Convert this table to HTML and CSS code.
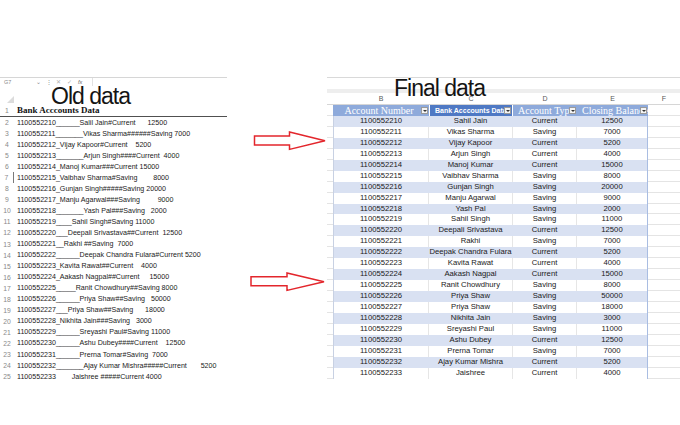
FILE: index.html
```html
<!DOCTYPE html>
<html>
<head>
<meta charset="utf-8">
<link rel="stylesheet" href="styles.css">
</head>
<body>
<div class="page">
  <section class="lp">
    <div class="fbar">
      <span class="nb">G7</span><span class="dd">⌄</span><span class="dots">⋮</span><span class="ic">✕</span><span class="ic">✓</span><span class="ic fx">fx</span><span class="fin"></span>
    </div>
    <div class="lch"><svg class="corner" width="7" height="7" viewBox="0 0 7 7"><path d="M7 0 V7 H0 Z" fill="#dcdcdc"/></svg></div>
    <div class="r1"><span class="rn">1</span><span class="t1">Bank Acccounts Data</span></div>
    <div class="lrows">
      <div class="lr"><span class="rn">2</span><span class="lt">1100552210______Salil Jain#Current      12500</span></div>
      <div class="lr"><span class="rn">3</span><span class="lt">1100552211_______Vikas Sharma######Saving 7000</span></div>
      <div class="lr"><span class="rn">4</span><span class="lt">1100552212_Vijay Kapoor#Current    5200</span></div>
      <div class="lr"><span class="rn">5</span><span class="lt">1100552213_______Arjun Singh####Current  4000</span></div>
      <div class="lr"><span class="rn">6</span><span class="lt">1100552214_Manoj Kumar###Current 15000</span></div>
      <div class="lr"><span class="rn sel">7</span><span class="lt">1100552215_Vaibhav Sharma#Saving        8000</span></div>
      <div class="lr"><span class="rn">8</span><span class="lt">1100552216_Gunjan Singh#####Saving 20000</span></div>
      <div class="lr"><span class="rn">9</span><span class="lt">1100552217_Manju Agarwal###Saving         9000</span></div>
      <div class="lr"><span class="rn">10</span><span class="lt">1100552218_______Yash Pal###Saving   2000</span></div>
      <div class="lr"><span class="rn">11</span><span class="lt">1100552219____Sahil Singh#Saving 11000</span></div>
      <div class="lr"><span class="rn">12</span><span class="lt">1100552220___Deepali Srivastava##Current  12500</span></div>
      <div class="lr"><span class="rn">13</span><span class="lt">1100552221__Rakhi ##Saving  7000</span></div>
      <div class="lr"><span class="rn">14</span><span class="lt">1100552222______Deepak Chandra Fulara#Current 5200</span></div>
      <div class="lr"><span class="rn">15</span><span class="lt">1100552223_Kavita Rawat##Current    4000</span></div>
      <div class="lr"><span class="rn">16</span><span class="lt">1100552224_Aakash Nagpal##Current     15000</span></div>
      <div class="lr"><span class="rn">17</span><span class="lt">1100552225_____Ranit Chowdhury##Saving 8000</span></div>
      <div class="lr"><span class="rn">18</span><span class="lt">1100552226______Priya Shaw##Saving   50000</span></div>
      <div class="lr"><span class="rn">19</span><span class="lt">1100552227___Priya Shaw##Saving      18000</span></div>
      <div class="lr"><span class="rn">20</span><span class="lt">1100552228_Nikhita Jain###Saving   3000</span></div>
      <div class="lr"><span class="rn">21</span><span class="lt">1100552229______Sreyashi Paul#Saving 11000</span></div>
      <div class="lr"><span class="rn">22</span><span class="lt">1100552230______Ashu Dubey####Current    12500</span></div>
      <div class="lr"><span class="rn">23</span><span class="lt">1100552231______Prerna Tomar#Saving  7000</span></div>
      <div class="lr"><span class="rn">24</span><span class="lt">1100552232_______Ajay Kumar Mishra#####Current       5200</span></div>
      <div class="lr"><span class="rn">25</span><span class="lt">1100552233        Jaishree #####Current 4000</span></div>
    </div>
    <div class="title old">Old data</div>
  </section>

  <div class="mid">
    <svg class="arrow a1" width="78" height="20" viewBox="0 0 78 20"><path d="M4.5 5 H39.5 V1 L75 9.7 L39.5 18.4 V14 H4.5 Z" fill="#fff" stroke="#e3262c" stroke-width="1.5" stroke-linejoin="miter"/></svg>
    <svg class="arrow a2" width="78" height="20" viewBox="0 0 78 20"><path d="M1 4.7 H37 V1 L74 9.7 L37 18.4 V13.7 H1 Z" fill="#fff" stroke="#e3262c" stroke-width="1.5" stroke-linejoin="miter"/></svg>
  </div>

  <section class="rp">
    <div class="rtop"></div>
    <div class="rband"></div>
    <div class="grid colhdr">
      <span></span><span>B</span><span>C</span><span>D</span><span>E</span><span>F</span>
    </div>
    <div class="grid th">
      <span class="ca"></span>
      <span class="h hs">Account Number<i class="fb"></i></span>
      <span class="h hc">Bank Acccounts Data<i class="fb"></i></span>
      <span class="h hs">Account Type<i class="fb"></i></span>
      <span class="h hs">Closing Balance<i class="fb"></i></span>
      <span class="cf"></span>
    </div>
    <div class="tbody">
      <div class="grid tr"><i class="ca"></i><span class="c">1100552210</span><span class="c">Sahil Jain</span><span class="c">Current</span><span class="c ce">12500</span><i class="cf"></i></div>
      <div class="grid tr"><i class="ca"></i><span class="c">1100552211</span><span class="c">Vikas Sharma</span><span class="c">Saving</span><span class="c ce">7000</span><i class="cf"></i></div>
      <div class="grid tr"><i class="ca"></i><span class="c">1100552212</span><span class="c">Vijay Kapoor</span><span class="c">Current</span><span class="c ce">5200</span><i class="cf"></i></div>
      <div class="grid tr"><i class="ca"></i><span class="c">1100552213</span><span class="c">Arjun Singh</span><span class="c">Current</span><span class="c ce">4000</span><i class="cf"></i></div>
      <div class="grid tr"><i class="ca"></i><span class="c">1100552214</span><span class="c">Manoj Kumar</span><span class="c">Current</span><span class="c ce">15000</span><i class="cf"></i></div>
      <div class="grid tr"><i class="ca"></i><span class="c">1100552215</span><span class="c">Vaibhav Sharma</span><span class="c">Saving</span><span class="c ce">8000</span><i class="cf"></i></div>
      <div class="grid tr"><i class="ca"></i><span class="c">1100552216</span><span class="c">Gunjan Singh</span><span class="c">Saving</span><span class="c ce">20000</span><i class="cf"></i></div>
      <div class="grid tr"><i class="ca"></i><span class="c">1100552217</span><span class="c">Manju Agarwal</span><span class="c">Saving</span><span class="c ce">9000</span><i class="cf"></i></div>
      <div class="grid tr"><i class="ca"></i><span class="c">1100552218</span><span class="c">Yash Pal</span><span class="c">Saving</span><span class="c ce">2000</span><i class="cf"></i></div>
      <div class="grid tr"><i class="ca"></i><span class="c">1100552219</span><span class="c">Sahil Singh</span><span class="c">Saving</span><span class="c ce">11000</span><i class="cf"></i></div>
      <div class="grid tr"><i class="ca"></i><span class="c">1100552220</span><span class="c">Deepali Srivastava</span><span class="c">Current</span><span class="c ce">12500</span><i class="cf"></i></div>
      <div class="grid tr"><i class="ca"></i><span class="c">1100552221</span><span class="c">Rakhi</span><span class="c">Saving</span><span class="c ce">7000</span><i class="cf"></i></div>
      <div class="grid tr"><i class="ca"></i><span class="c">1100552222</span><span class="c">Deepak Chandra Fulara</span><span class="c">Current</span><span class="c ce">5200</span><i class="cf"></i></div>
      <div class="grid tr"><i class="ca"></i><span class="c">1100552223</span><span class="c">Kavita Rawat</span><span class="c">Current</span><span class="c ce">4000</span><i class="cf"></i></div>
      <div class="grid tr"><i class="ca"></i><span class="c">1100552224</span><span class="c">Aakash Nagpal</span><span class="c">Current</span><span class="c ce">15000</span><i class="cf"></i></div>
      <div class="grid tr"><i class="ca"></i><span class="c">1100552225</span><span class="c">Ranit Chowdhury</span><span class="c">Saving</span><span class="c ce">8000</span><i class="cf"></i></div>
      <div class="grid tr"><i class="ca"></i><span class="c">1100552226</span><span class="c">Priya Shaw</span><span class="c">Saving</span><span class="c ce">50000</span><i class="cf"></i></div>
      <div class="grid tr"><i class="ca"></i><span class="c">1100552227</span><span class="c">Priya Shaw</span><span class="c">Saving</span><span class="c ce">18000</span><i class="cf"></i></div>
      <div class="grid tr"><i class="ca"></i><span class="c">1100552228</span><span class="c">Nikhita Jain</span><span class="c">Saving</span><span class="c ce">3000</span><i class="cf"></i></div>
      <div class="grid tr"><i class="ca"></i><span class="c">1100552229</span><span class="c">Sreyashi Paul</span><span class="c">Saving</span><span class="c ce">11000</span><i class="cf"></i></div>
      <div class="grid tr"><i class="ca"></i><span class="c">1100552230</span><span class="c">Ashu Dubey</span><span class="c">Current</span><span class="c ce">12500</span><i class="cf"></i></div>
      <div class="grid tr"><i class="ca"></i><span class="c">1100552231</span><span class="c">Prerna Tomar</span><span class="c">Saving</span><span class="c ce">7000</span><i class="cf"></i></div>
      <div class="grid tr"><i class="ca"></i><span class="c">1100552232</span><span class="c">Ajay Kumar Mishra</span><span class="c">Current</span><span class="c ce">5200</span><i class="cf"></i></div>
      <div class="grid tr"><i class="ca"></i><span class="c">1100552233</span><span class="c">Jaishree</span><span class="c">Current</span><span class="c ce">4000</span><i class="cf"></i></div>
    </div>
    <div class="title fin-t">Final data</div>
  </section>
</div>
</body>
</html>
```

FILE: styles.css
```css
* { box-sizing: border-box; }
html, body { margin: 0; background: #fff; }
body { font-family: "Liberation Sans", Arial, sans-serif; color: #111; }

.page { display: flex; padding-top: 77px; height: 425px; overflow: hidden; }

/* ---------- left panel ---------- */
.lp { width: 227px; flex: none; position: relative; }
.fbar {
  height: 15px; border-top: 1px solid #d6d6d6;
  display: flex; align-items: center; font-size: 5.5px; line-height: 5px; color: #8a8a8a;
  padding-bottom: 6px;
}
.fbar .nb { width: 36px; padding-left: 4px; }
.fbar .dd { width: 10px; font-size: 6px; }
.fbar .dots { width: 10px; }
.fbar .ic { width: 11px; color: #b0b0b0; font-size: 5.5px; }
.fbar .fx { font-style: italic; color: #666; }
.fbar .fin { flex: 1; height: 8px; border-left: 1px solid #e2e2e2; margin-left: 3px; }

.lch { height: 12px; position: relative; display: flex; align-items: flex-end; padding-left: 7px; padding-bottom: 1px; }

.r1 { height: 13px; border-bottom: 1px solid #505050; display: flex; align-items: center; }
.t1 { font-family: "Liberation Serif", "Times New Roman", serif; font-weight: bold; font-size: 9px; padding-left: 3px; color: #111; }

.lr { height: 11.05px; display: flex; align-items: center; }
.rn { width: 14px; text-align: center; font-size: 6.8px; color: #8a8a8a; flex: none; line-height: 11px; }
.rn.sel { border-right: 1px solid #7a7a7a; }
.lt { white-space: pre; font-size: 7.1px; padding-left: 3px; color: #1a1a1a; }

.title {
  position: absolute; font-size: 23px; line-height: 17px;
  letter-spacing: -1px; color: #141414; font-family: "Liberation Sans", Arial, sans-serif;
  white-space: nowrap;
}
.title.old { top: 11px; left: 51px; }
.title.fin-t { top: 3px; left: 67px; }

/* ---------- arrows ---------- */
.mid { width: 100px; flex: none; display: flex; flex-direction: column; }
.arrow { display: block; margin-left: 23px; }
.a1 { margin-top: 54px; }
.a2 { margin-top: 121px; }

/* ---------- right panel ---------- */
.rp { flex: 1; position: relative; }
.rtop { height: 12px; border-top: 1px solid #d9d9d9; }
.rband { height: 4px; background: #eeeeee; }
.grid { display: grid; grid-template-columns: 6px 96px 84px 64px 71px 1fr; }

.colhdr { height: 12px; border-bottom: 1px solid #d6d6d6; font-size: 7px; color: #5a5a5a; align-items: end; }
.colhdr span { text-align: center; line-height: 7px; padding-bottom: 2px; }

.th { height: 11px; }
.ca, .cf { display: block; box-shadow: inset 0 -1px 0 #e4e4e4; }
.h {
  position: relative; overflow: hidden; white-space: nowrap;
  color: #fff; text-align: center; padding: 0 9px 0 5px; line-height: 11px;
}
.hs { background: #8eaadb; font-family: "Liberation Serif", "Times New Roman", serif; font-size: 10px; }
.hc { background: #4f79c4; font-size: 7px; font-weight: bold; border-left: 1px solid #fff; border-right: 1px solid #fff; }
.fb {
  position: absolute; right: 1px; top: 2px; width: 7px; height: 7px;
  background: #f4f4f4; border: 1px solid #9a9a9a;
}
.fb::after {
  content: ""; position: absolute; left: 1px; top: 1.5px;
  border-left: 2px solid transparent; border-right: 2px solid transparent; border-top: 2px solid #333;
}

.tr { height: 10.95px; }
.c {
  font-size: 7.7px; line-height: 10.95px; text-align: center; color: #1a1a1a;
  white-space: nowrap; border-right: 1px solid #e6e6e6;
}
.tr .c:nth-child(2) { border-left: 1px solid #c8d1e3; }
.c.ce { border-right: 1px solid #a9bde2; }
.tr:nth-child(odd) .c { background: #d9e1f2; border-right-color: #d9e1f2; }
.tr:nth-child(odd) .c.ce { border-right-color: #a9bde2; }
.tr:nth-child(odd) .c:nth-child(2) { border-left-color: #c8d1e3; }
```
